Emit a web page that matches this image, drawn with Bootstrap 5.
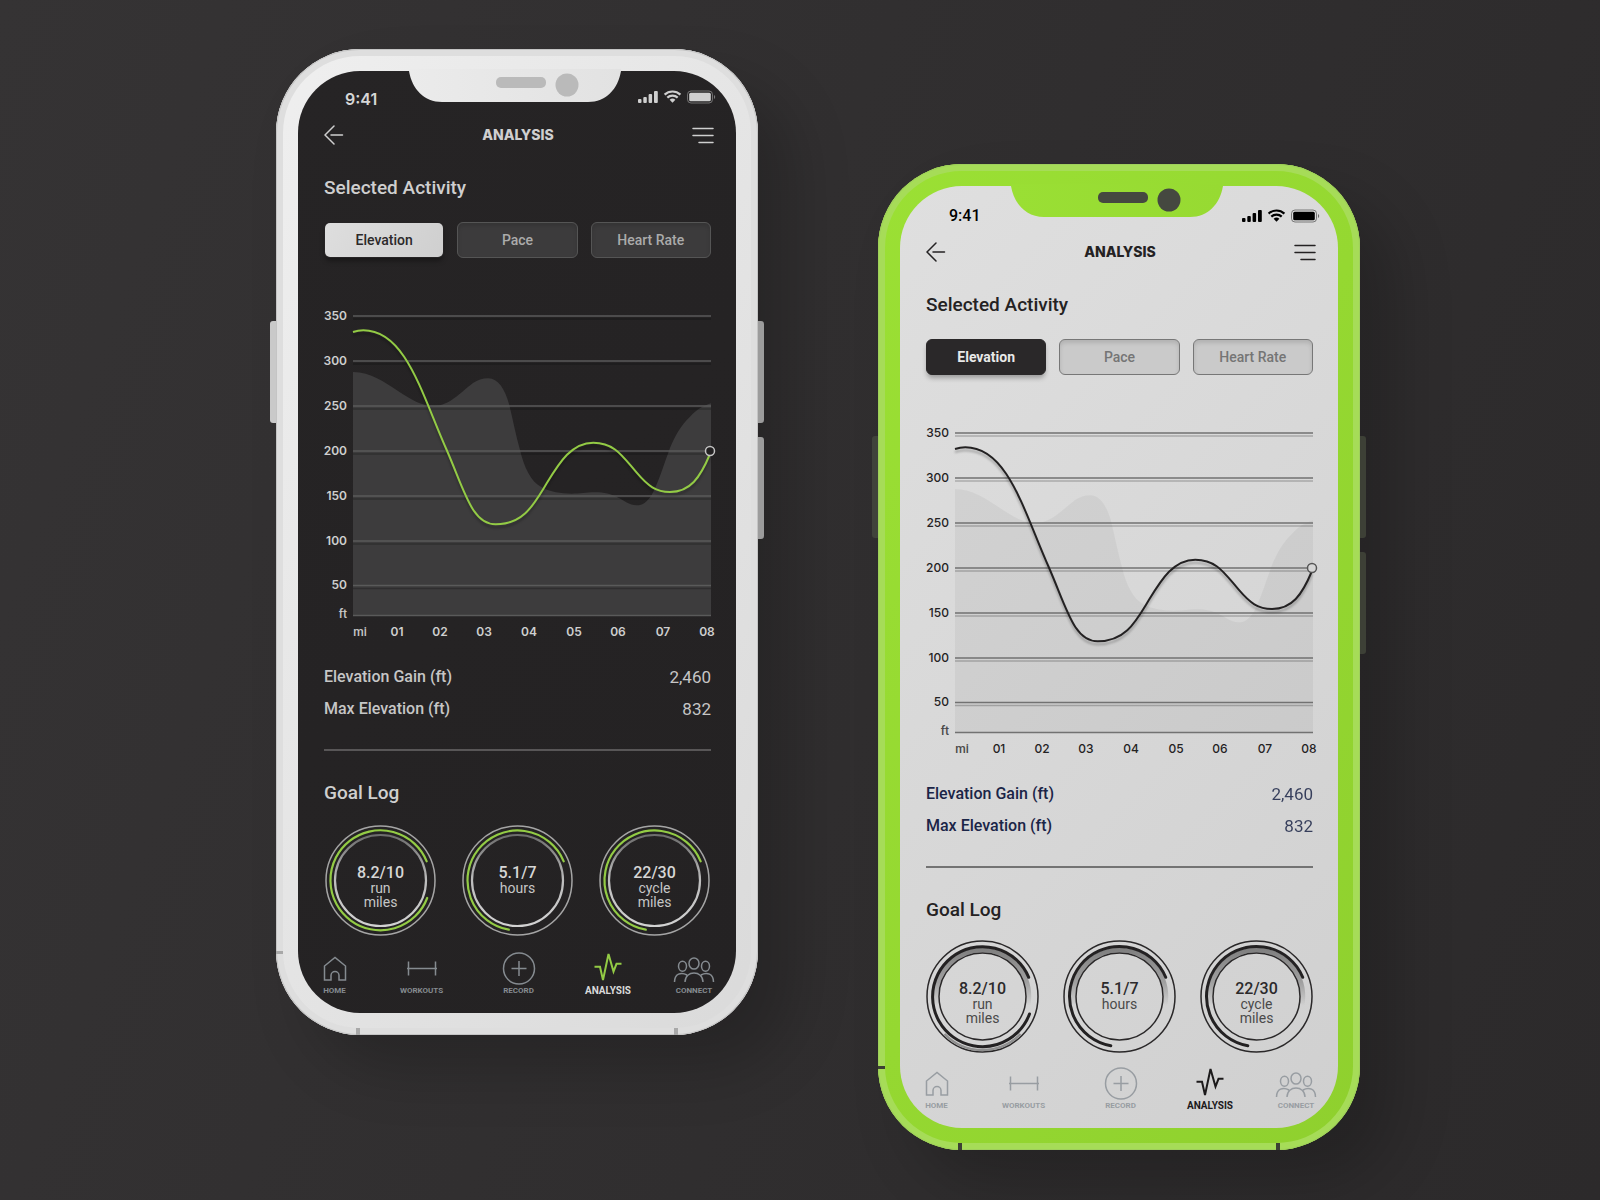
<!DOCTYPE html>
<html lang="en">
<head>
<meta charset="utf-8">
<meta name="viewport" content="width=device-width, initial-scale=1">
<title>Analysis – dark and light themes</title>
<link href="https://cdn.jsdelivr.net/npm/bootstrap@5.3.0/dist/css/bootstrap.min.css" rel="stylesheet">
<style>
  body {
    font-family: Roboto, "Noto Sans", sans-serif;
    background: linear-gradient(110deg, #353334 0%, #302e2f 55%, #2c2a2b 100%) #302e2f;
    min-height: 100vh;
  }
  .stage { gap: 120px; padding: 49px 16px 50px 52px; }

  .phone {
    --rim: #dedede; --frame-a: #efefef; --frame-b: #dadada; --edge: #c4c4c4; --key: #c9c9c9; --key-r: #9c9c9c;
    --seam: #a8a8a8;
    --screen: linear-gradient(135deg, #262425, #242223);
    --ink: #cfcfcf; --stat: #c6c6c6; --soft: #c6c6c6; --strong: #d6d6d6;
    --tab-bg: #3c3b3c; --tab-line: #555; --tab-ink: #ababab;
    --grid: #5a5a5a; --area: #3d3c3d; --curve: #93cb45; --knob: #c4c4c4; --knob-fill: #232122;
    --nav: #858b90; --nav-on: #d9d9d9; --pulse: #93cb45; --rule: #585657;
    --top-pad: 16px;
    position: relative;
    width: 482px; max-width: 100%;
    padding: 22px;
    border-radius: 84px;
    background: linear-gradient(120deg, var(--frame-a), var(--frame-b));
    box-shadow: inset 0 0 0 1px var(--edge), inset 0 0 0 7px var(--rim), 34px 34px 60px rgba(0,0,0,.2);
  }
  .phone-light {
    --rim: #a6dc58; --frame-a: #9be034; --frame-b: #8fd02e; --edge: #9fcf5c; --key: #40433b; --key-r: #3d4036;
    --seam: #3c4034;
    --screen: linear-gradient(135deg, #dfdfdf, #d0d0d0);
    --ink: #242223; --stat: #1b2547; --soft: #4a4a4a; --strong: #2c2a2b;
    --tab-bg: #cacaca; --tab-line: #777; --tab-ink: #757575;
    --grid: #727272; --area: rgba(0,0,0,.045); --curve: #232122; --knob: #555; --knob-fill: #d6d6d6;
    --nav: #989da2; --nav-on: #1c1a1b; --pulse: #1c1a1b; --rule: #737373;
    --top-pad: 18px;
    margin-top: 115px;
  }
  .side-key { position: absolute; width: 6px; height: 102px; background: var(--key-r); }
  .key-left { left: -6px; top: 272px; border-radius: 3px 0 0 3px; background: var(--key); }
  .key-up { right: -6px; top: 272px; border-radius: 0 3px 3px 0; }
  .key-down { right: -6px; top: 388px; border-radius: 0 3px 3px 0; }
  .seam { position: absolute; background: var(--seam); }
  .seam-left { left: 0; bottom: 81px; width: 7px; height: 3px; }
  .seam-bl { left: 80px; bottom: 0; width: 4px; height: 7px; }
  .seam-br { right: 80px; bottom: 0; width: 4px; height: 7px; }
  .notch { position: absolute; left: 50%; top: 20px; margin-left: -108px; width: 212px; height: 34px; }

  .screen {
    border-radius: 62px;
    background: var(--screen);
    padding: var(--top-pad) 25px 16px 26px;
    color: var(--ink);
  }
  .status { height: 24px; padding-left: 21px; margin-right: -5px; }
  .clock { font: 600 16px/26px Inter, sans-serif; color: var(--strong); }
  .phone-light .clock { font: 500 16px/26px Roboto, sans-serif; color: #000; }
  .phone-light .status { color: #000; padding-left: 23px; margin-right: -7px; }
  .topbar { margin-top: 12px; height: 24px; }
  .icon-btn { color: inherit; background: none; border: 0; padding: 0; line-height: 0; }
  .menu-btn { margin-right: -3px; }
  .screen-title { font: 800 14px/24px Inter, sans-serif; margin: 0; }
  .block-title { font-size: 19px; font-weight: 500; line-height: 24px; margin: 29px 0 0; }
  .goal-title { margin-top: 30px; }
  .tabs { gap: 13px; margin-top: 22px; }
  .tab-btn {
    flex: 1 1 0; height: 36px; padding: 0; font-size: 14px; font-weight: 500; line-height: 20px; border-radius: 6px;
    color: var(--tab-ink); background: var(--tab-bg); border: 1px solid var(--tab-line);
    box-shadow: inset 0 3px 4px rgba(0,0,0,.12);
  }
  .tab-btn.active {
    color: #2b292a; background: linear-gradient(120deg, #dedede, #cfcfcf) padding-box;
    border: 1px solid transparent; box-shadow: 0 4px 5px -1px rgba(0,0,0,.35);
  }
  .phone-light .tab-btn.active { color: #e8e8e8; background: #2a2829; border: 1px solid #2a2829; font-weight: 700; box-shadow: 0 4px 5px -1px rgba(0,0,0,.3); }

  .chart { display: block; width: 100%; height: auto; overflow: visible; margin-top: 48px; }
  .grid-lines { stroke: var(--grid); stroke-width: 1.5; filter: drop-shadow(0 3px 0 rgba(0,0,0,.22)); }
  .base-line { stroke: var(--grid); stroke-width: 1.5; }
  .area { fill: var(--area); }
  .curve { fill: none; stroke: var(--curve); stroke-width: 2; filter: drop-shadow(0 3px 1px rgba(0,0,0,.25)); }
  .knob { fill: var(--knob-fill); stroke: var(--knob); stroke-width: 1.5; }
  .chart text { font: 600 12px Inter, sans-serif; fill: var(--ink); }
  .chart .unit { font: 500 12px Roboto, sans-serif; fill: var(--soft); }
  .phone-light .chart text { font-weight: 500; }

  .stats { margin: 25px 0 0; color: var(--stat); }
  .stats dt { font-size: 16px; line-height: 32px; font-weight: 500; }
  .stats dd { font-size: 17px; line-height: 32px; margin: 0; }
  .phone-light .stats dd { opacity: .85; }
  .rule { margin: 24px 0 0; border: 0; border-top: 2px solid var(--rule); opacity: 1; }

  .rings { margin-top: 19px; }
  .phone-light .rings { margin-top: 18px; }
  .goal { display: grid; }
  .goal > * { grid-area: 1 / 1; }
  .goal svg { width: 113px; height: 113px; fill: none; }
  .goal-text { text-align: center; padding-top: 41px; line-height: 14px; font-size: 14px; color: var(--soft); }
  .goal-text strong { display: block; font-size: 16px; font-weight: 500; line-height: 16px; color: var(--strong); }

  .tabbar { display: grid; grid-template-columns: 21fr 153fr 41fr 138fr 34fr; margin-top: 14px; }
  .phone-light .tabbar { margin-top: 13px; }
  .tab-link { min-width: 0; width: 0; justify-self: center; display: flex; flex-direction: column; align-items: center; color: var(--nav); text-decoration: none; font-size: 8px; font-weight: 700; line-height: 12px; }
  .tab-link svg { height: 34px; width: 42px; flex: none; fill: none; stroke: currentColor; stroke-width: 1.5; }
  .tab-link.on { color: var(--nav-on); font-size: 10px; }
  .tab-link.on svg { color: var(--pulse); stroke-width: 2; }
</style>
</head>
<body>

<svg width="0" height="0" class="position-absolute" aria-hidden="true">
  <defs>
    <linearGradient id="ringDark" x1="0" y1="0" x2="0" y2="1"><stop offset="0" stop-color="#6d6d6d"/><stop offset=".5" stop-color="#bdbdbd"/><stop offset="1" stop-color="#d2d2d2"/></linearGradient>
    <linearGradient id="shadeTop" x1="0" y1="0" x2="0" y2="1"><stop offset="0" stop-color="#808080"/><stop offset=".35" stop-color="#8a8a8a" stop-opacity=".7"/><stop offset=".6" stop-color="#8a8a8a" stop-opacity="0"/></linearGradient>
    <linearGradient id="notchDark"><stop offset="0" stop-color="#ebebeb"/><stop offset="1" stop-color="#e2e2e2"/></linearGradient>
    <linearGradient id="notchLight"><stop offset="0" stop-color="#9adf34"/><stop offset="1" stop-color="#97da32"/></linearGradient>
  </defs>
  <symbol id="notchShape" viewBox="0 0 212 34"><path d="M0 0V2C3 20 15 33 33 33H179C197 33 209 20 212 2V0Z"/></symbol>
  <symbol id="sensors" viewBox="0 0 212 34"><rect x="87" y="8" width="50" height="11" rx="5"/><circle cx="158" cy="16" r="11.5"/></symbol>
  <symbol id="status" viewBox="0 0 78 14">
    <g fill="currentColor"><rect x="0" y="9" width="3.5" height="4" rx="1"/><rect x="5.3" y="7" width="3.5" height="6" rx="1"/><rect x="10.6" y="4" width="3.5" height="9" rx="1"/><rect x="16" y="1" width="3.8" height="12" rx="1"/>
    <path d="M34.5 12.8l2.9-3a4.2 4.2 0 0 0-5.8 0z"/></g>
    <path d="M29.3 7.6a7.6 7.6 0 0 1 10.4 0M26.6 4.6a11.6 11.6 0 0 1 15.8 0" fill="none" stroke="currentColor" stroke-width="2.2"/>
    <rect x="49.5" y="1" width="25" height="12" rx="3.5" fill="none" stroke="currentColor" opacity=".45"/>
    <rect x="51.2" y="2.7" width="21.6" height="8.6" rx="1.5" fill="currentColor"/>
    <path d="M76 5v4c1.6-.6 1.6-3.4 0-4z" fill="currentColor" opacity=".5"/>
  </symbol>
  <symbol id="back" viewBox="0 0 20 20"><path d="M10 1L1 10l9 9M7 10h11.500" fill="none" stroke="currentColor" stroke-width="1.5" stroke-linecap="round"/></symbol>
  <symbol id="menu" viewBox="0 0 22 18"><path d="M1 2.500h20M1 9.500h20M7 16.500h14" fill="none" stroke="currentColor" stroke-width="1.500" stroke-linecap="round"/></symbol>
  <symbol id="gridPath" overflow="visible"><path d="M29 10H387M29 55H387M29 100H387M29 145H387M29 190H387M29 235H387M29 279.500H387"/></symbol>
  <symbol id="areaPath" overflow="visible"><path d="M29 66C47 66 60 76 74 85S96 99.700 111 99.700C125 99.700 136 87 149 77C154 74 158 72.300 164.300 72.300C174 72.300 181 83 185.300 99C189 114 192 130 196 144C200 161 207 176 217.700 181.300C226 186 237 187.700 247.700 187.700C256 187.700 262 186.300 271 186.300C280 186.300 287 188 294.300 191.700C300 194 305 199.300 312.700 199.300C319 199.300 323 196 327.700 189C334 178 340 158 346 142C351 130 357 119 366 110.700C373 103 379 100 387 97.300V309.500H29Z"/></symbol>
  <symbol id="curvePath" overflow="visible"><path d="M29 26C32 25 36 24.300 39.300 24.300C82 24.300 98 89 122.700 144C141 186 148 218.300 171.700 218.300C200 218.300 210 198 222.700 177.300C236 155.500 248 136.700 269.300 136.700C291 136.700 299 151 312.700 166.700C324 180 332 186 346 186C366 186 376 172 386 148"/></symbol>
  <symbol id="home" viewBox="0 0 42 34"><path d="M10.500 29V15L21 6.500L31.500 15V29H25V24.500A4 4 0 0 0 17 24.500V29Z"/></symbol>
  <symbol id="workouts" viewBox="0 0 42 34"><path d="M7.500 10.500V24.500M34.500 10.500V24.500M6 17.500H36"/></symbol>
  <symbol id="record" viewBox="0 0 42 34"><circle cx="21" cy="17.500" r="15.500"/><path d="M21 10V25M13.500 17.500H28.500"/></symbol>
  <symbol id="pulse" viewBox="0 0 42 34"><path d="M7.500 15.800H13L16 29L21.500 3L26.500 20.500L29.500 12.800H34.500"/></symbol>
  <symbol id="connect" viewBox="0 0 42 34"><ellipse cx="21" cy="12.500" rx="5" ry="5.500"/><ellipse cx="9.500" cy="15.300" rx="4" ry="5"/><ellipse cx="32.500" cy="15.300" rx="4" ry="5"/><path d="M12 31C12 19 30 19 30 31M1.500 31C1.500 23 8 20.500 14 24M40.500 31C40.500 23 34 20.500 28 24"/></symbol>
</svg>

<main class="stage d-flex flex-wrap justify-content-center align-items-start">

  <section class="phone" aria-label="Dark theme">
    <span class="side-key key-left"></span><span class="side-key key-up"></span><span class="side-key key-down"></span>
    <span class="seam seam-left"></span><span class="seam seam-bl"></span><span class="seam seam-br"></span>
    <div class="screen">
      <div class="status d-flex justify-content-between align-items-center">
        <span class="clock">9:41</span>
        <svg width="78" height="14" class="mb-1" aria-hidden="true"><use href="#status"/></svg>
      </div>
      <header class="topbar d-flex justify-content-between align-items-center">
        <button class="icon-btn" type="button" aria-label="Back"><svg width="20" height="20"><use href="#back"/></svg></button>
        <h1 class="screen-title">ANALYSIS</h1>
        <button class="icon-btn menu-btn" type="button" aria-label="Menu"><svg width="22" height="18"><use href="#menu"/></svg></button>
      </header>
      <h2 class="block-title">Selected Activity</h2>
      <div class="tabs d-flex">
        <button type="button" class="btn tab-btn active">Elevation</button>
        <button type="button" class="btn tab-btn">Pace</button>
        <button type="button" class="btn tab-btn">Heart Rate</button>
      </div>
      <svg class="chart" viewBox="0 0 387 330" role="img" aria-label="Elevation chart">
        <use href="#areaPath" class="area"/>
        <g class="grid-lines"><use href="#gridPath"/></g>
        <path class="base-line" d="M29 309.500H387"/>
        <g class="curve"><use href="#curvePath"/></g>
        <circle class="knob" cx="386" cy="145" r="4.500"/>
        <g text-anchor="end">
          <text x="23" y="14">350</text><text x="23" y="59">300</text><text x="23" y="104">250</text><text x="23" y="149">200</text><text x="23" y="194">150</text><text x="23" y="239">100</text><text x="23" y="283">50</text><text class="unit" x="23" y="312">ft</text>
        </g>
        <g text-anchor="middle">
          <text class="unit" x="36" y="330">mi</text><text x="73" y="330">01</text><text x="116" y="330">02</text><text x="160" y="330">03</text><text x="205" y="330">04</text><text x="250" y="330">05</text><text x="294" y="330">06</text><text x="339" y="330">07</text><text x="383" y="330">08</text>
        </g>
      </svg>
      <dl class="stats">
        <div class="d-flex justify-content-between"><dt>Elevation Gain (ft)</dt><dd>2,460</dd></div>
        <div class="d-flex justify-content-between"><dt>Max Elevation (ft)</dt><dd>832</dd></div>
      </dl>
      <hr class="rule">
      <h2 class="block-title goal-title">Goal Log</h2>
      <div class="rings d-flex justify-content-between">
        <div class="goal">
          <svg viewBox="-56.500 -56.500 113 113"><circle r="54.500" stroke="#a5a5a5" stroke-width="1.500"/><circle r="45.500" stroke="url(#ringDark)" stroke-width="2.200"/><path d="M46.200 -19.200A50 50 0 1 0 46.700 17.500" stroke="#93cb45" stroke-width="2.200" stroke-linecap="round"/></svg>
          <div class="goal-text"><strong>8.2/10</strong>run<br>miles</div>
        </div>
        <div class="goal">
          <svg viewBox="-56.500 -56.500 113 113"><circle r="54.500" stroke="#a5a5a5" stroke-width="1.500"/><circle r="45.500" stroke="url(#ringDark)" stroke-width="2.200"/><path d="M46.200 -19.200A50 50 0 1 0 -8.700 49.200" stroke="#93cb45" stroke-width="2.200" stroke-linecap="round"/></svg>
          <div class="goal-text"><strong>5.1/7</strong>hours</div>
        </div>
        <div class="goal">
          <svg viewBox="-56.500 -56.500 113 113"><circle r="54.500" stroke="#a5a5a5" stroke-width="1.500"/><circle r="45.500" stroke="url(#ringDark)" stroke-width="2.200"/><path d="M46.200 -19.200A50 50 0 1 0 -8.700 49.200" stroke="#93cb45" stroke-width="2.200" stroke-linecap="round"/></svg>
          <div class="goal-text"><strong>22/30</strong>cycle<br>miles</div>
        </div>
      </div>
      <nav class="tabbar" aria-label="Main, dark theme">
        <a class="tab-link" href="#home"><svg><use href="#home"/></svg>HOME</a>
        <a class="tab-link" href="#workouts"><svg><use href="#workouts"/></svg>WORKOUTS</a>
        <a class="tab-link" href="#record"><svg><use href="#record"/></svg>RECORD</a>
        <a class="tab-link on" href="#pulse" aria-current="page"><svg><use href="#pulse"/></svg>ANALYSIS</a>
        <a class="tab-link" href="#connect"><svg><use href="#connect"/></svg>CONNECT</a>
      </nav>
    </div>
    <svg class="notch" aria-hidden="true"><use href="#notchShape" fill="url(#notchDark)"/><use href="#sensors" fill="#bababa"/></svg>
  </section>

  <section class="phone phone-light" aria-label="Light theme">
    <span class="side-key key-left"></span><span class="side-key key-up"></span><span class="side-key key-down"></span>
    <span class="seam seam-left"></span><span class="seam seam-bl"></span><span class="seam seam-br"></span>
    <div class="screen">
      <div class="status d-flex justify-content-between align-items-center">
        <span class="clock">9:41</span>
        <svg width="78" height="14" aria-hidden="true"><use href="#status"/></svg>
      </div>
      <header class="topbar d-flex justify-content-between align-items-center">
        <button class="icon-btn" type="button" aria-label="Back"><svg width="20" height="20"><use href="#back"/></svg></button>
        <h1 class="screen-title">ANALYSIS</h1>
        <button class="icon-btn menu-btn" type="button" aria-label="Menu"><svg width="22" height="18"><use href="#menu"/></svg></button>
      </header>
      <h2 class="block-title">Selected Activity</h2>
      <div class="tabs d-flex">
        <button type="button" class="btn tab-btn active">Elevation</button>
        <button type="button" class="btn tab-btn">Pace</button>
        <button type="button" class="btn tab-btn">Heart Rate</button>
      </div>
      <svg class="chart" viewBox="0 0 387 330" role="img" aria-label="Elevation chart">
        <use href="#areaPath" class="area"/>
        <g class="grid-lines"><use href="#gridPath"/></g>
        <path class="base-line" d="M29 309.500H387"/>
        <g class="curve"><use href="#curvePath"/></g>
        <circle class="knob" cx="386" cy="145" r="4.500"/>
        <g text-anchor="end">
          <text x="23" y="14">350</text><text x="23" y="59">300</text><text x="23" y="104">250</text><text x="23" y="149">200</text><text x="23" y="194">150</text><text x="23" y="239">100</text><text x="23" y="283">50</text><text class="unit" x="23" y="312">ft</text>
        </g>
        <g text-anchor="middle">
          <text class="unit" x="36" y="330">mi</text><text x="73" y="330">01</text><text x="116" y="330">02</text><text x="160" y="330">03</text><text x="205" y="330">04</text><text x="250" y="330">05</text><text x="294" y="330">06</text><text x="339" y="330">07</text><text x="383" y="330">08</text>
        </g>
      </svg>
      <dl class="stats">
        <div class="d-flex justify-content-between"><dt>Elevation Gain (ft)</dt><dd>2,460</dd></div>
        <div class="d-flex justify-content-between"><dt>Max Elevation (ft)</dt><dd>832</dd></div>
      </dl>
      <hr class="rule">
      <h2 class="block-title goal-title">Goal Log</h2>
      <div class="rings d-flex justify-content-between">
        <div class="goal">
          <svg viewBox="-56.500 -56.500 113 113"><circle r="46.500" stroke="url(#shadeTop)" stroke-width="4.500"/><circle r="55.500" stroke="#2a2829" stroke-width="1.500"/><circle r="43.500" stroke="#2a2829" stroke-width="1.500"/><path d="M38 37.500A53 53 0 0 1 -38 37.500" stroke="#8f8f8f" stroke-width="2.500"/><path d="M46.200 -19.200A50 50 0 1 0 47 17.500" stroke="#232122" stroke-width="3" stroke-linecap="round"/></svg>
          <div class="goal-text"><strong>8.2/10</strong>run<br>miles</div>
        </div>
        <div class="goal">
          <svg viewBox="-56.500 -56.500 113 113"><circle r="46.500" stroke="url(#shadeTop)" stroke-width="4.500"/><circle r="55.500" stroke="#2a2829" stroke-width="1.500"/><circle r="43.500" stroke="#2a2829" stroke-width="1.500"/><path d="M46.200 -19.200A50 50 0 1 0 -8.700 49.200" stroke="#232122" stroke-width="3" stroke-linecap="round"/></svg>
          <div class="goal-text"><strong>5.1/7</strong>hours</div>
        </div>
        <div class="goal">
          <svg viewBox="-56.500 -56.500 113 113"><circle r="46.500" stroke="url(#shadeTop)" stroke-width="4.500"/><circle r="55.500" stroke="#2a2829" stroke-width="1.500"/><circle r="43.500" stroke="#2a2829" stroke-width="1.500"/><path d="M46.200 -19.200A50 50 0 1 0 -8.700 49.200" stroke="#232122" stroke-width="3" stroke-linecap="round"/></svg>
          <div class="goal-text"><strong>22/30</strong>cycle<br>miles</div>
        </div>
      </div>
      <nav class="tabbar" aria-label="Main, light theme">
        <a class="tab-link" href="#home"><svg><use href="#home"/></svg>HOME</a>
        <a class="tab-link" href="#workouts"><svg><use href="#workouts"/></svg>WORKOUTS</a>
        <a class="tab-link" href="#record"><svg><use href="#record"/></svg>RECORD</a>
        <a class="tab-link on" href="#pulse" aria-current="page"><svg><use href="#pulse"/></svg>ANALYSIS</a>
        <a class="tab-link" href="#connect"><svg><use href="#connect"/></svg>CONNECT</a>
      </nav>
    </div>
    <svg class="notch" aria-hidden="true"><use href="#notchShape" fill="url(#notchLight)"/><use href="#sensors" fill="#454840"/></svg>
  </section>

</main>
<script src="https://cdn.jsdelivr.net/npm/bootstrap@5.3.0/dist/js/bootstrap.bundle.min.js"></script>
</body>
</html>
